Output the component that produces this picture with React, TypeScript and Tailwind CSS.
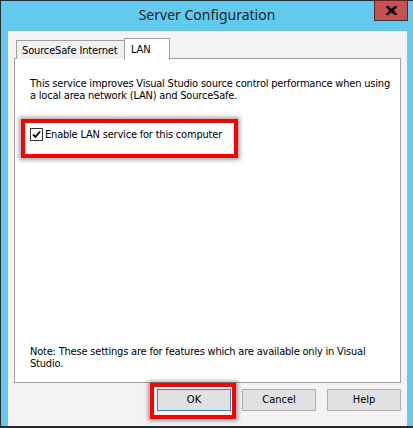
import React from "react";

const uiFont = {
  fontFamily: '"DejaVu Sans Condensed", "Liberation Sans", sans-serif',
};

// red annotation box drawn over a control
const Highlight = ({ className }: { className: string }) => (
  <div
    className={`pointer-events-none absolute border-[4px] border-[#ff0000] shadow-[0_0_4px_2px_rgba(0,0,0,0.35)] ${className}`}
  />
);

const DialogButton = ({
  label,
  primary,
  children,
}: {
  label: string;
  primary?: boolean;
  children?: React.ReactNode;
}) => (
  <div className="relative">
    <button
      className={`flex h-[22px] w-[74px] items-center justify-center bg-[#e1e1e1] text-[11px] text-black border ${
        primary ? "border-[#3c7fb1]" : "border-[#adadad]"
      }`}
    >
      {label}
    </button>
    {children}
  </div>
);

const App = () => {
  return (
    <div
      className="flex h-[428px] w-[413px] flex-col border-l border-t border-b-2 border-[#2b2b2b] bg-[#62c9ef]"
      style={uiFont}
    >
      {/* title bar */}
      <div className="relative flex h-[30px] items-center justify-center pb-[3px]">
        <span
          className="text-[14px] text-[#1e1e1e]"
          style={{ fontFamily: '"Noto Sans", "Open Sans", sans-serif' }}
        >
          Server Configuration
        </span>
        <button className="absolute right-[5px] top-[-1px] flex h-[21px] w-[34px] items-center justify-center border border-[#5b2626] bg-[#c75050]">
          <svg width="11" height="9" viewBox="0 0 11 9">
            <path
              d="M1.5 1 L9.5 8 M9.5 1 L1.5 8"
              stroke="#000"
              strokeWidth="2.6"
              strokeLinecap="square"
            />
          </svg>
        </button>
      </div>

      {/* client area */}
      <div className="ml-[7px] mr-[6px] flex flex-1 flex-col bg-[#f5f2f5] pl-[6px] pr-[5px] pt-[7px] pb-[8px]">
        {/* tabs */}
        <div className="relative z-10 flex h-[21px] items-end pl-[2px] tracking-[-0.15px]">
          <div className="flex h-[19px] w-[109px] items-center border border-b-0 border-[#a0a0a0] bg-[#f0f0f0] pl-[5px] pt-[2px] text-[11px] text-black">
            SourceSafe Internet
          </div>
          <div className="-ml-px flex h-[22px] w-[46px] items-start border border-b-0 border-[#a0a0a0] bg-white pl-[6px] pt-[3px] text-[11px] text-black -mb-px">
            LAN
          </div>
        </div>

        {/* tab page */}
        <div className="-mt-px flex h-[325px] w-[387px] flex-col border border-[#a0a0a0] bg-white pl-[15px] pr-[3px] pt-[19px] pb-[12px] text-[11px] leading-[12px] tracking-[-0.2px] text-black">
          <p>
            This service improves Visual Studio source control performance when
            using a local area network (LAN) and SourceSafe.
          </p>

          <div className="relative mt-[26px] flex items-center gap-[2px]">
            <span className="flex h-[13px] w-[13px] items-center justify-center border border-[#333] bg-white">
              <svg width="9" height="9" viewBox="0 0 9 9">
                <path
                  d="M1 4.5 L3.5 7 L8 1.5"
                  fill="none"
                  stroke="#000"
                  strokeWidth="1.8"
                />
              </svg>
            </span>
            <span className="leading-[13px]">Enable LAN service for this computer</span>
            <Highlight className="left-[-9px] top-[-9px] h-[39px] w-[217px]" />
          </div>

          <p className="mt-auto">
            Note: These settings are for features which are available only in
            Visual Studio.
          </p>
        </div>

        {/* dialog buttons */}
        <div className="mt-[6px] flex justify-end gap-[11px] pr-[1px]">
          <DialogButton label="OK" primary>
            <Highlight className="left-[-7px] top-[-6px] h-[36px] w-[86px]" />
          </DialogButton>
          <DialogButton label="Cancel" />
          <DialogButton label="Help" />
        </div>
      </div>
    </div>
  );
};

export default App;
